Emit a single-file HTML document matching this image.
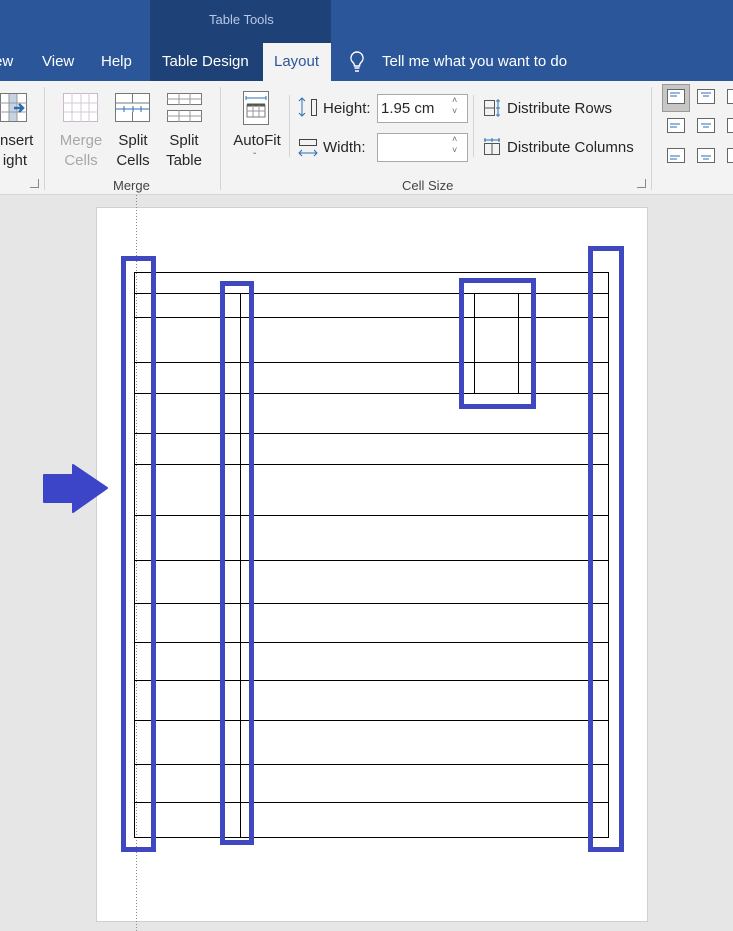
<!DOCTYPE html>
<html><head><meta charset="utf-8"><style>
*{margin:0;padding:0;box-sizing:border-box}
body{width:733px;height:931px;overflow:hidden;background:#e6e6e6;font-family:"Liberation Sans",sans-serif;position:relative}
.a{position:absolute;white-space:nowrap}
.tab{color:#fff;font-size:15px;top:53px}
.lbl{font-size:15px;color:#262626;text-align:center;line-height:20px}
.g{font-size:13px;color:#444}
</style></head><body>
<div class="a" style="left:0;top:0;width:733px;height:81px;background:#2b579a"></div>
<div class="a" style="left:150px;top:0;width:181px;height:81px;background:#1e4178"></div>
<div class="a" style="left:209px;top:12px;color:#b8c8e4;font-size:13px">Table Tools</div>
<div class="a" style="left:263px;top:43px;width:68px;height:38px;background:#f3f3f3"></div>
<div class="a tab" style="left:-6px">ew</div>
<div class="a tab" style="left:42px">View</div>
<div class="a tab" style="left:101px">Help</div>
<div class="a tab" style="left:162px">Table Design</div>
<div class="a tab" style="left:274px;color:#2b579a">Layout</div>
<svg class="a" style="left:348px;top:50px" width="18" height="24"><path d="M9 2a6 6 0 0 0-4 10.5c1 1 1.5 2 1.5 3.5h5c0-1.5.5-2.5 1.5-3.5A6 6 0 0 0 9 2zM6.5 18h5M7 21h4" fill="none" stroke="#fff" stroke-width="1.4"/></svg>
<div class="a tab" style="left:382px">Tell me what you want to do</div>
<div class="a" style="left:0;top:81px;width:733px;height:114px;background:#f3f3f3;border-bottom:1px solid #d6d6d6"></div>
<!-- separators -->
<div class="a" style="left:44px;top:87px;width:1px;height:103px;background:#d4d4d4"></div>
<div class="a" style="left:220px;top:87px;width:1px;height:103px;background:#d4d4d4"></div>
<div class="a" style="left:289px;top:95px;width:1px;height:62px;background:#d4d4d4"></div>
<div class="a" style="left:473px;top:95px;width:1px;height:62px;background:#d4d4d4"></div>
<div class="a" style="left:651px;top:87px;width:1px;height:103px;background:#d4d4d4"></div>
<!-- icons -->
<svg class="a" style="left:0;top:90px" width="30" height="36"><rect x="0.5" y="3.5" width="26" height="28" fill="#fff" stroke="#777"/><rect x="9" y="4" width="8" height="27" fill="#c5d3e4"/><path d="M0 13h27M0 22h27M9 4v27M17 4v27" stroke="#999"/><path d="M14 18h9M19 14l4 4-4 4" stroke="#2e6db4" stroke-width="2.5" fill="none"/></svg>
<svg class="a" style="left:63px;top:93px" width="36" height="30"><rect x="0.5" y="0.5" width="34" height="28" fill="#fff" stroke="#c9b8c9"/><path d="M0 10h35M0 19h35M9 0v29M18 0v29M26 0v29" stroke="#d8c8d8"/></svg>
<svg class="a" style="left:115px;top:93px" width="36" height="30"><rect x="0.5" y="0.5" width="34" height="28" fill="#fff" stroke="#777"/><path d="M0 10h35M17.5 0v10M17.5 19v10" stroke="#777"/><path d="M1 16h33M9 13v6M18 13v6M26 13v6" stroke="#2e6db4"/></svg>
<svg class="a" style="left:167px;top:93px" width="36" height="30"><rect x="0.5" y="0.5" width="34" height="11" fill="#fff" stroke="#777"/><rect x="0.5" y="17.5" width="34" height="11" fill="#fff" stroke="#777"/><path d="M0 6h35M12 0v12M23 0v12M12 17v12M23 17v12M0 23h35" stroke="#999"/></svg>
<svg class="a" style="left:242px;top:90px" width="30" height="36"><rect x="1.5" y="1.5" width="25" height="33" fill="#fff" stroke="#777"/><path d="M4 8h20M4 6v4M24 6v4" stroke="#2e6db4"/><rect x="5" y="15" width="18" height="12" fill="#fff" stroke="#777"/><path d="M5 15h18" stroke="#555" stroke-width="3"/><path d="M5 21h18M11 15v12M17 15v12" stroke="#999"/></svg>
<div class="a lbl" style="left:0;top:131px;width:27px;text-align:right">nsert<br>ight</div>
<div class="a lbl" style="left:56px;top:131px;width:50px;color:#a8a8a8">Merge<br>Cells</div>
<div class="a lbl" style="left:108px;top:131px;width:50px">Split<br>Cells</div>
<div class="a lbl" style="left:159px;top:131px;width:50px">Split<br>Table</div>
<div class="a lbl" style="left:229px;top:131px;width:56px">AutoFit</div>
<div class="a" style="left:253px;top:152px;font-size:10px;color:#666">ˇ</div>
<div class="a g" style="left:113px;top:178px">Merge</div>
<div class="a g" style="left:402px;top:178px">Cell Size</div>
<div class="a" style="left:30px;top:179px;width:9px;height:9px;border:1px solid #888;border-top:none;border-left:none"></div>
<div class="a" style="left:637px;top:179px;width:9px;height:9px;border:1px solid #888;border-top:none;border-left:none"></div>
<svg class="a" style="left:298px;top:97px" width="22" height="22"><path d="M4 1v18M1 4l3-3 3 3M1 16l3 3 3-3" stroke="#2e6db4" fill="none"/><rect x="13.5" y="2.5" width="5" height="16" fill="none" stroke="#444"/></svg>
<svg class="a" style="left:298px;top:137px" width="22" height="22"><rect x="1.5" y="2.5" width="17" height="6" fill="none" stroke="#444"/><path d="M1 16h18M4 13l-3 3 3 3M16 13l3 3-3 3" stroke="#2e6db4" fill="none"/></svg>
<div class="a lbl" style="left:323px;top:99px">Height:</div>
<div class="a lbl" style="left:323px;top:138px">Width:</div>
<div class="a" style="left:377px;top:94px;width:91px;height:29px;background:#fff;border:1px solid #aaa;font-size:15px;padding:5px 3px;color:#262626">1.95 cm</div>
<div class="a" style="left:377px;top:133px;width:91px;height:29px;background:#fff;border:1px solid #aaa"></div>
<div class="a" style="left:452px;top:95px;font-size:9px;color:#666;line-height:11px">˄<br>˅</div>
<div class="a" style="left:452px;top:134px;font-size:9px;color:#666;line-height:11px">˄<br>˅</div>
<svg class="a" style="left:484px;top:98px" width="18" height="20"><rect x="0.5" y="2.5" width="10" height="15" fill="none" stroke="#555"/><path d="M0 10h11" stroke="#555"/><path d="M14 1v18M12 3h4M12 17h4M12 10h4" stroke="#2e6db4"/></svg>
<svg class="a" style="left:484px;top:137px" width="18" height="20"><rect x="0.5" y="6.5" width="15" height="11" fill="none" stroke="#555"/><path d="M8 6v12" stroke="#555"/><path d="M0 3h16M1 1v4M8 1v4M15 1v4" stroke="#2e6db4"/></svg>
<div class="a lbl" style="left:507px;top:99px">Distribute Rows</div>
<div class="a lbl" style="left:507px;top:138px">Distribute Columns</div>
<div class="a" style="left:662px;top:84px;width:28px;height:28px;background:#c6c6c6;border:1px solid #999"></div>
<svg class="a" style="left:662px;top:84px" width="71" height="90">
<g fill="#fff" stroke="#666"><rect x="5.5" y="5.5" width="17" height="14"/><rect x="35.5" y="5.5" width="17" height="14"/><rect x="65.5" y="5.5" width="17" height="14"/>
<rect x="5.5" y="34.5" width="17" height="14"/><rect x="35.5" y="34.5" width="17" height="14"/><rect x="65.5" y="34.5" width="17" height="14"/>
<rect x="5.5" y="64.5" width="17" height="14"/><rect x="35.5" y="64.5" width="17" height="14"/><rect x="65.5" y="64.5" width="17" height="14"/></g>
<g stroke="#2e6db4"><path d="M8 9h10M8 12h7M39 9h10M41 12h6M8 40h10M8 43h7M39 40h10M41 43h6M8 72h10M8 75h7M39 72h10M41 75h6"/></g></svg>
<!-- document -->
<svg class="a" style="left:0;top:0" width="733" height="931">
<rect x="96.5" y="207.5" width="551" height="714" fill="#fff" stroke="#d0d0d0"/>
<path d="M136.5 195v736" stroke="#888" stroke-dasharray="1 2"/>
<g stroke="#000" stroke-width="1" fill="none">
<rect x="134.5" y="272.5" width="474" height="565"/>
<path d="M134 293.5h475M134 317.5h475M134 362.5h475M134 393.5h475M134 433.5h475M134 464.5h475M134 515.5h475M134 560.5h475M134 603.5h475M134 642.5h475M134 680.5h475M134 720.5h475M134 764.5h475M134 802.5h475"/>
<path d="M240.5 293v545M474.5 293v101M518.5 293v101"/>
</g>
<g stroke="#4048c0" stroke-width="5" fill="none">
<rect x="123.5" y="258.5" width="30" height="591"/>
<rect x="222.5" y="283.5" width="29" height="559"/>
<rect x="461.5" y="280.5" width="72" height="126"/>
<rect x="590.5" y="248.5" width="31" height="601"/>
</g>
<path d="M44 475h29v-10l34 23-34 24v-10h-29z" fill="#3c44c8" stroke="#3c44c8" stroke-linejoin="round" stroke-width="2"/>
</svg>
</body></html>
